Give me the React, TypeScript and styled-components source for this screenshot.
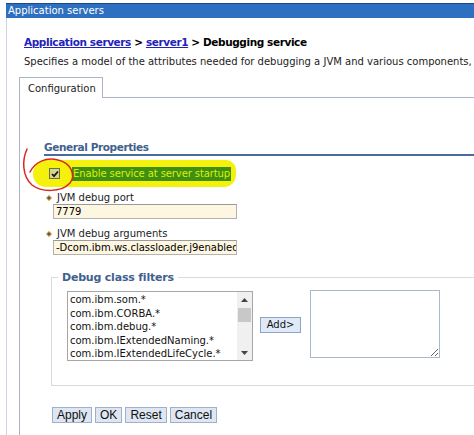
import React from 'react';
import styled, { createGlobalStyle } from 'styled-components';

const GlobalStyle = createGlobalStyle`
  html, body {
    margin: 0;
    padding: 0;
    background: #fff;
    overflow: hidden;
  }
  body {
    font-family: "DejaVu Sans", Verdana, sans-serif;
    font-size: 10px;
    color: #000;
  }
`;

const Frame = styled.div`
  position: relative;
  width: 474px;
  height: 435px;
  overflow: hidden;
  padding-top: 3px;
  box-sizing: border-box;
`;

const Inner = styled.div`
  width: 640px;
`;

const TitleBar = styled.div`
  margin-left: 6px;
  height: 14px;
  line-height: 14px;
  padding-left: 2px;
  background: #2d6fc1;
  border-top: 1px solid #1b4a85;
  color: #fff;
  font-size: 10px;
`;

const Page = styled.div`
  margin-left: 6px;
  height: 420px;
  border-left: 1px solid #ccd4df;
  padding-top: 18px;
  padding-left: 17px;
`;

const Breadcrumb = styled.div`
  font-size: 10.5px;
  font-weight: bold;
  line-height: 13px;
  letter-spacing: -0.4px;

  a {
    color: #1f23b8;
    text-decoration: underline;
  }
`;

const Description = styled.div`
  margin-top: 7px;
  font-size: 10px;
  line-height: 12px;
  white-space: nowrap;
  color: #222;
`;

const TabRow = styled.div`
  display: flex;
  margin-top: 9px;
  margin-left: -5px;
`;

const Tab = styled.div`
  height: 21px;
  line-height: 21px;
  padding: 0 8px 0 8px;
  border: 1px solid #aab5c5;
  border-bottom: none;
  font-size: 10px;
  color: #222;
  box-sizing: border-box;
  width: 84px;
`;

const TabFiller = styled.div`
  flex: 1;
  border-bottom: 1px solid #aab5c5;
`;

const Panel = styled.div`
  margin-left: -5px;
  border-left: 1px solid #aab5c5;
  padding-left: 24px;
  padding-top: 43px;
  height: 400px;
`;

const SectionHeading = styled.div`
  font-size: 10.5px;
  font-weight: bold;
  line-height: 13px;
  letter-spacing: -0.4px;
  color: #41608e;
  border-bottom: 2px solid #4a6c9c;
`;

const HighlightRow = styled.div`
  display: flex;
  align-items: center;
  margin-top: 4px;
  margin-left: -11px;
  width: 203px;
  height: 27px;
  padding-left: 16px;
  box-sizing: border-box;
  background: #f4f20c;
  border-radius: 14px 10px 12px 13px;
`;

const CheckBox = styled.span`
  display: inline-flex;
  align-items: center;
  justify-content: center;
  width: 11px;
  height: 11px;
  box-sizing: border-box;
  border: 1px solid #6e6e4a;
  background: #d6d68c;
`;

const EnableLabel = styled.span`
  margin-left: 12px;
  padding: 0 1px;
  background: #3f8f14;
  color: #dcef00;
  font-size: 10px;
  line-height: 14px;
  letter-spacing: -0.1px;
  white-space: nowrap;
`;

const FieldLabel = styled.div<{ $top: number }>`
  display: flex;
  align-items: center;
  margin-top: ${p => p.$top}px;
  margin-left: 2px;
  font-size: 10px;
  line-height: 13px;
  color: #222;

  svg {
    margin-right: 5px;
  }
`;

const TextInput = styled.div`
  margin-left: 9px;
  width: 184px;
  height: 15px;
  box-sizing: border-box;
  border: 1px solid #b3b3b3;
  border-top-color: #9a9a9a;
  background: #fdf6e1;
  font-size: 10px;
  line-height: 13px;
  padding-left: 2px;
  overflow: hidden;
  white-space: nowrap;
`;

const Fieldset = styled.fieldset`
  margin: 16px 0 0 7px;
  padding: 0 0 24px 6px;
  border: 1px solid #dadada;
`;

const Legend = styled.legend`
  padding: 0 4px;
  font-size: 11px;
  font-weight: bold;
  line-height: 13px;
  letter-spacing: -0.2px;
  color: #41608e;
`;

const FilterRow = styled.div`
  display: flex;
  align-items: flex-start;
  margin-top: 7px;
  margin-left: 9px;
`;

const ListBox = styled.div`
  display: flex;
  width: 186px;
  height: 70px;
  box-sizing: border-box;
  border: 1px solid #a6a6a6;
  background: #fff;
`;

const ListItems = styled.div`
  flex: 1;
  padding: 1px 0 0 2px;
  font-size: 10px;
  line-height: 13.6px;
  overflow: hidden;
  white-space: nowrap;
  color: #111;
`;

const ScrollTrack = styled.div`
  width: 15px;
  display: flex;
  flex-direction: column;
  align-items: center;
  background: #f0f0f0;
`;

const ScrollArrow = styled.div`
  height: 15px;
  display: flex;
  align-items: center;
  justify-content: center;
`;

const ScrollThumb = styled.div`
  width: 13px;
  height: 14px;
  margin-top: 1px;
  background: #c8c8c8;
`;

const ScrollSpacer = styled.div`
  flex: 1;
`;

const SmallButton = styled.button<{ $sans?: boolean }>`
  height: 16px;
  padding: 0 4px;
  border: 1px solid #9fb0c7;
  background: #dde6f2;
  color: #111;
  font-family: ${p => (p.$sans ? '"Liberation Sans", Arial, sans-serif' : '"DejaVu Sans", Verdana, sans-serif')};
  font-size: ${p => (p.$sans ? '12px' : '10px')};
  line-height: 14px;
  border-radius: 0;
  cursor: pointer;
`;

const AddButton = styled(SmallButton)`
  margin-top: 26px;
  margin-left: 7px;
  width: 41px;
  background: #dfe9f7;
  border-color: #8ea4c1;
`;

const FilterArea = styled.textarea`
  margin-top: -1px;
  margin-left: 9px;
  width: 130px;
  height: 68px;
  box-sizing: border-box;
  border: 1px solid #aab8cc;
  background: #fff;
  padding: 2px;
  font-family: "DejaVu Sans", Verdana, sans-serif;
  font-size: 10px;
`;

const ButtonRow = styled.div`
  display: flex;
  gap: 3px;
  margin-top: 21px;
  margin-left: 8px;
`;

const Annotation = styled.svg`
  position: absolute;
  left: 0;
  top: 0;
  pointer-events: none;
`;

const Diamond = () => (
  <svg width="6" height="6" viewBox="0 0 6 6">
    <path d="M3 0 L6 3 L3 6 L0 3 Z" fill="#b08a48" />
    <path d="M3 1.6 L4.4 3 L3 4.4 L1.6 3 Z" fill="#6a4f22" />
  </svg>
);

const filters = [
  'com.ibm.som.*',
  'com.ibm.CORBA.*',
  'com.ibm.debug.*',
  'com.ibm.IExtendedNaming.*',
  'com.ibm.IExtendedLifeCycle.*',
];

export default function App() {
  return (
    <Frame>
      <GlobalStyle />
      <Inner>
        <TitleBar>Application servers</TitleBar>
        <Page>
          <Breadcrumb>
            <a>Application servers</a> &gt; <a>server1</a> &gt; Debugging service
          </Breadcrumb>
          <Description>
            Specifies a model of the attributes needed for debugging a JVM and various components, such as the debugger.
          </Description>
          <TabRow>
            <Tab>Configuration</Tab>
            <TabFiller />
          </TabRow>
          <Panel>
            <SectionHeading>General Properties</SectionHeading>
            <HighlightRow>
              <CheckBox>
                <svg width="8" height="8" viewBox="0 0 8 8">
                  <path d="M1 4 L3 6.2 L7 1.5" stroke="#1a1a10" strokeWidth="1.8" fill="none" />
                </svg>
              </CheckBox>
              <EnableLabel>Enable service at server startup</EnableLabel>
            </HighlightRow>

            <FieldLabel $top={4}>
              <Diamond />
              JVM debug port
            </FieldLabel>
            <TextInput>7779</TextInput>

            <FieldLabel $top={8}>
              <Diamond />
              JVM debug arguments
            </FieldLabel>
            <TextInput>-Dcom.ibm.ws.classloader.j9enabled=true</TextInput>

            <Fieldset>
              <Legend>Debug class filters</Legend>
              <FilterRow>
                <ListBox>
                  <ListItems>
                    {filters.map(f => (
                      <div key={f}>{f}</div>
                    ))}
                  </ListItems>
                  <ScrollTrack>
                    <ScrollArrow>
                      <svg width="7" height="4" viewBox="0 0 7 4">
                        <path d="M0 4 L3.5 0 L7 4 Z" fill="#444" />
                      </svg>
                    </ScrollArrow>
                    <ScrollThumb />
                    <ScrollSpacer />
                    <ScrollArrow>
                      <svg width="7" height="4" viewBox="0 0 7 4">
                        <path d="M0 0 L7 0 L3.5 4 Z" fill="#444" />
                      </svg>
                    </ScrollArrow>
                  </ScrollTrack>
                </ListBox>
                <AddButton>Add&gt;</AddButton>
                <FilterArea />
              </FilterRow>
            </Fieldset>

            <ButtonRow>
              <SmallButton $sans>Apply</SmallButton>
              <SmallButton $sans>OK</SmallButton>
              <SmallButton $sans>Reset</SmallButton>
              <SmallButton $sans>Cancel</SmallButton>
            </ButtonRow>
          </Panel>
        </Page>
      </Inner>
      <Annotation width="474" height="435">
        <path
          d="M27 149 C22 160 22 176 32 185 C41 192 61 193 70 183 C76 175 71 163 58 160 C46 157 35 162 30 172"
          stroke="#d8261c"
          strokeWidth="1.5"
          fill="none"
          strokeLinecap="round"
        />
      </Annotation>
    </Frame>
  );
}
